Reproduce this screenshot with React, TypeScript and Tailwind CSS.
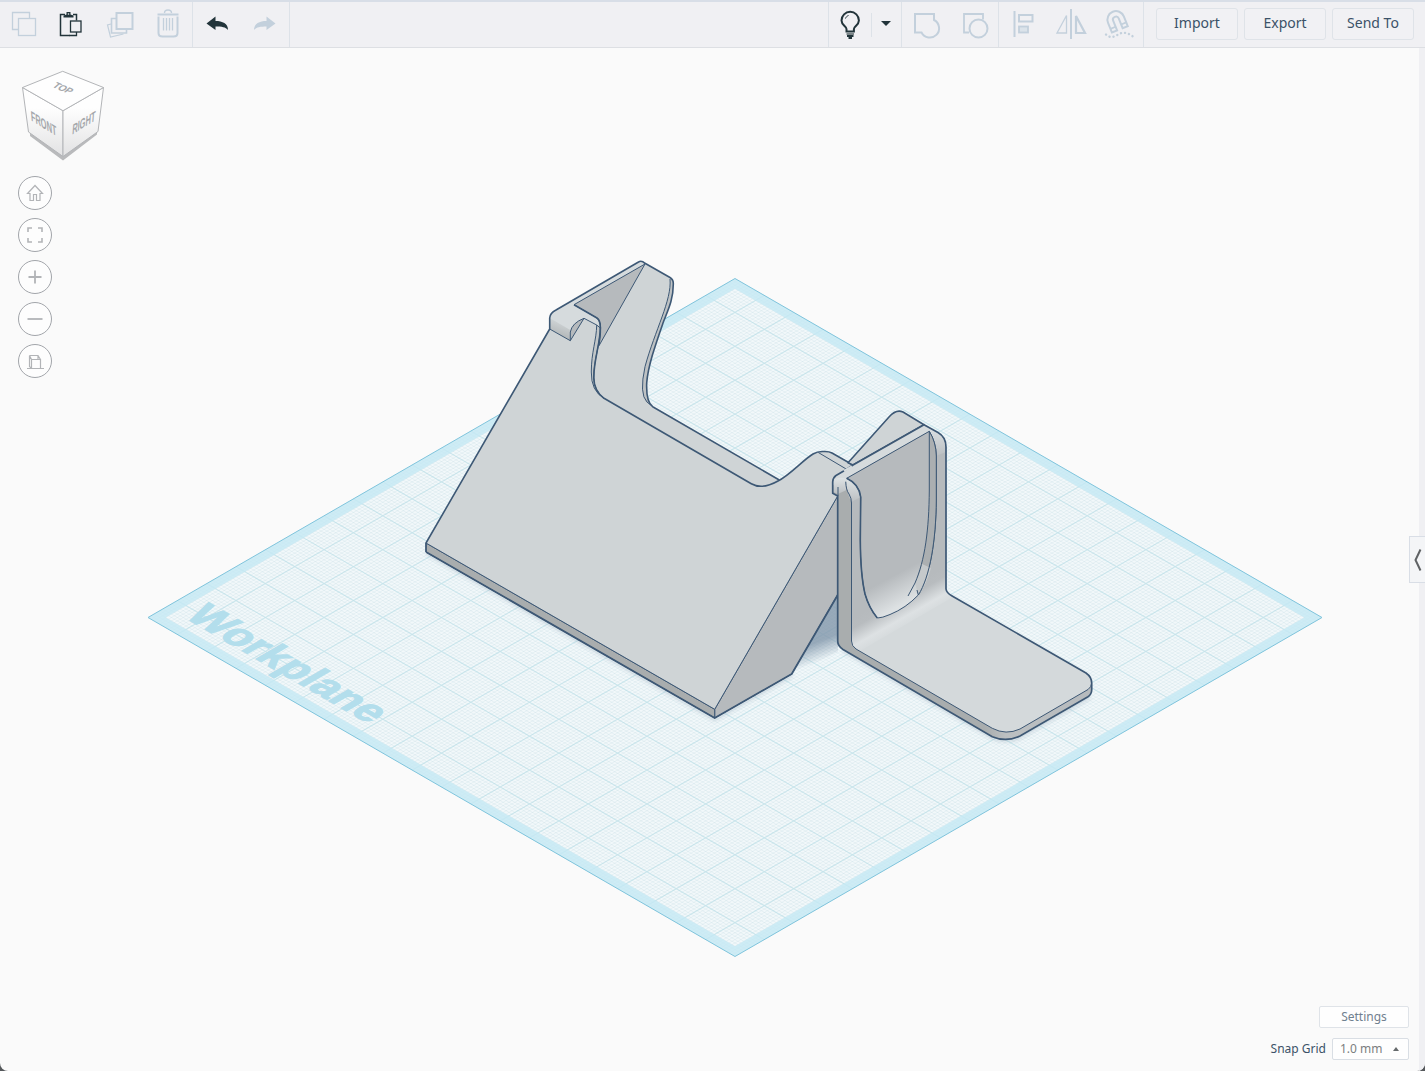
import type { ReactNode } from "react"
import clsx from "clsx"

const INK = "#22343a"
const MUTED = "#c3d0dc"
const EDGE = "#3d5875"

// The workplane is 200 x 200 mm, drawn in millimetres and projected once.
const SIZE = 200

function gridPath(step: number) {
  let d = ""
  for (let i = step; i < SIZE; i += step) {
    d += `M${i} 0V${SIZE}M0 ${i}H${SIZE}`
  }
  return d
}

const MINOR_GRID = gridPath(1)
const MAJOR_GRID = gridPath(10)

const BRACKET_OUTLINE =
  "M846.7 469.3L853 465L924 424.7L938 432.5Q946 437 946 447V589Q946.5 593 951.7 595.7L1086 673Q1091.7 677 1091.7 683V690Q1091.5 694.5 1088 696.7L1020 736Q1006 742.5 992.3 736.7L843 649.5Q837.7 646 837.7 641V496L832.7 493.3V482Q833 477.5 836 475.5z"

function ToolButton({ label, disabled, children }: { label: string; disabled?: boolean; children: ReactNode }) {
  return (
    <button type="button" aria-label={label} disabled={disabled} className="w-12 h-full">
      <svg
        viewBox="0 2 48 45"
        className="block w-12 h-[45px]"
        fill="none"
        stroke={disabled ? MUTED : INK}
        strokeWidth="1.8"
      >
        {children}
      </svg>
    </button>
  )
}

function ToolGroup({ className, children }: { className?: string; children: ReactNode }) {
  return <div className={clsx("flex h-full border-[#dde2e8]", className)}>{children}</div>
}

function ActionButton({ children }: { children: ReactNode }) {
  return (
    <button
      type="button"
      className="w-[82px] h-8 pb-0.5 rounded-[3px] border border-[#dfe3e8] bg-[#f1f1f4] text-sm text-[#3b5268]"
    >
      {children}
    </button>
  )
}

function Toolbar() {
  return (
    <header className="flex h-12 justify-between border-t-2 border-b border-t-[#d8dee7] border-b-[#dddfe3] bg-[#f0f0f3]">
      <div className="flex">
        <ToolGroup className="border-r">
          <ToolButton label="Copy" disabled>
            <path d="M18.5 29.5h-6v-17h17v6" strokeWidth="1.3" />
            <rect x="18.5" y="18.5" width="17" height="17" strokeWidth="1.3" />
          </ToolButton>
          <ToolButton label="Paste">
            <path d="M22 35.5h-9.5v-21h4.5M25 14.5h3.5v6" strokeWidth="1.5" />
            <rect x="22.500" y="21" width="10.5" height="11" strokeWidth="1.3" />
            <path d="M28.5 32v3.5h-7" strokeWidth="1.3" />
            <path d="M15.5 17.5v-2l3-1v-2.5h4v2.5l3 1v2z" fill={INK} stroke="none" />
            <circle cx="20.5" cy="14" r="0.8" fill="#f0f0f3" stroke="none" />
          </ToolButton>
          <ToolButton label="Duplicate" disabled>
            <rect x="20.500" y="13" width="16" height="16" strokeWidth="2" />
            <path d="M20 18.5h-4.500v14.500h15v-3.500" strokeWidth="1.6" />
            <path d="M15 24l-3.5 1 3 12 13-3" strokeWidth="1.2" />
          </ToolButton>
          <ToolButton label="Delete" disabled>
            <path d="M13.5 14.500h21" strokeWidth="2" />
            <path d="M20.5 13c0-2 1-3 3.5-3s3.5 1 3.5 3" strokeWidth="1.4" />
            <path d="M14.5 16.500v16.500c0 2.500 1.500 3.500 4 3.500h11c2.500 0 4-1 4-3.500v-16.500" strokeWidth="2" />
            <path d="M19.5 18v12.500M22.5 18v12.500M25.5 18v12.500M28.5 18v12.500" strokeWidth="1.3" />
          </ToolButton>
        </ToolGroup>
        <ToolGroup className="border-r">
          <ToolButton label="Undo">
            <path d="M13.5 23.500l9-7v4.500c7 0 12.500 2.500 12.500 9-2.500-3-6-3.500-12.500-3.500v3.500z" fill={INK} stroke="none" />
          </ToolButton>
          <ToolButton label="Redo" disabled>
            <path d="M34.5 23.500l-9-7v4.500c-7 0-12.500 2.500-12.500 9 2.500-3 6.500-3.500 12.500-3.500v3.500z" fill={MUTED} stroke="none" />
          </ToolButton>
        </ToolGroup>
      </div>

      <div className="flex">
        <ToolGroup className="border-l items-center">
          <button type="button" aria-label="Show hints" className="w-[42px]">
            <svg viewBox="0 2 42 45" className="block w-[42px] h-[45px]" fill="none" stroke={INK} strokeWidth="2">
              <path d="M17.5 31.500v-2.500c0-2.500-5-4-5-8.500a8.700 8.700 0 0 1 17.400 0c0 4.500-5 6-5 8.500v2.500z" />
              <path d="M16.500 18.500c.5-1.500 1.500-2.500 3-3" strokeWidth="1" />
              <path d="M17.500 34h7.500" stroke="#7b8588" />
              <path d="M18 36h6.500" />
              <path d="M19.500 38h3.500" />
            </svg>
          </button>
          <button
            type="button"
            aria-label="More view options"
            className="flex items-center justify-center w-[30px] h-6 border-l border-[#dde2e8] pb-0.5 pr-0.5"
          >
            <svg viewBox="0 0 10 5" className="w-2.5 h-[5px]" fill={INK}>
              <path d="M0 0h10L5 5z" />
            </svg>
          </button>
        </ToolGroup>
        <ToolGroup className="border-l">
          <ToolButton label="Group" disabled>
            <path d="M32 20v-6h-19v18.500h6.500a9.300 9.300 0 1 0 12.500-12.500z" strokeWidth="2" />
          </ToolButton>
          <ToolButton label="Ungroup" disabled>
            <path d="M19 32.500h-5v-18.500h19v5.500" strokeWidth="1.8" />
            <circle cx="28.5" cy="28.5" r="9" strokeWidth="2" />
          </ToolButton>
        </ToolGroup>
        <ToolGroup className="border-l">
          <ToolButton label="Align" disabled>
            <path d="M15.500 11v26" strokeWidth="2" />
            <rect x="20" y="15" width="13.500" height="6.500" strokeWidth="2" />
            <rect x="20" y="26.500" width="9" height="6" fill="#dbe3ea" />
          </ToolButton>
          <ToolButton label="Mirror" disabled>
            <path d="M24 9v30" strokeWidth="2" />
            <path d="M19.500 15.500v17.500h-9.500z" strokeWidth="1.300" />
            <path d="M29 16v17h9z" strokeWidth="2.200" />
          </ToolButton>
          <ToolButton label="Cruise" disabled>
            <g transform="rotate(-22 21.5 21)">
              <path d="M13 30v-10.500a8.500 8.500 0 0 1 17 0v10.500h-5.500v-10.500a3 3 0 0 0-6 0v10.500z" strokeWidth="2" />
              <path d="M13 26h5.500M24.500 26h5.500" strokeWidth="1.800" />
            </g>
            <path
              d="M11 34.500c4 4 8 2.500 12 0s9-2.500 15 2"
              strokeWidth="2.400"
              strokeDasharray="0.1 4"
              strokeLinecap="round"
            />
          </ToolButton>
        </ToolGroup>
        <div className="flex items-center gap-1.5 border-l border-[#dde2e8] pl-3 pr-[11px] pb-px">
          <ActionButton>Import</ActionButton>
          <ActionButton>Export</ActionButton>
          <ActionButton>Send To</ActionButton>
        </div>
      </div>
    </header>
  )
}

function Workplane() {
  return (
    <>
      <g transform="matrix(2.935 1.695 2.935 -1.695 148 617.5)">
        <rect width={SIZE} height={SIZE} fill="#f2f8fa" />
        <path d={MINOR_GRID} stroke="#a3cbd6" strokeOpacity="0.22" strokeWidth="0.2" fill="none" />
        <path d={MAJOR_GRID} stroke="#9bd3df" strokeOpacity="0.34" strokeWidth="0.4" fill="none" />
        <path
          d={`M0 0H${SIZE}V${SIZE}H0zM3 3V${SIZE - 3}H${SIZE - 3}V3z`}
          fill="#c4e8f4"
          fillOpacity="0.8"
          fillRule="evenodd"
        />
        <rect
          width={SIZE}
          height={SIZE}
          fill="none"
          stroke="#7fc4dc"
          strokeWidth="1"
          vectorEffect="non-scaling-stroke"
        />
      </g>
      <text
        transform="matrix(2.935 1.695 -2.935 1.695 183.500 617)"
        fontSize="12.4"
        fontFamily="'Liberation Sans', Arial, sans-serif"
        fontWeight="bold"
        fill="#b3deec"
        stroke="#b3deec"
        strokeWidth="0.4"
      >
        Workplane
      </text>
    </>
  )
}

function WedgeStand() {
  return (
    <g stroke={EDGE} strokeWidth="1" strokeLinejoin="round" fill="none">
      {/* side and bottom faces */}
      <path d="M714.7 709.3L837.7 496L849 500V575L791.7 674L714.7 718z" fill="#b6babd" />
      <path d="M426 543L714.7 709.3V718L426 552z" fill="#a9adae" />

      {/* sloped face together with the inside of the cut-out */}
      <path
        d="M426 543L549.7 329V318Q550 313 556 310L638.5 262Q641.5 260 645 263.3L670 277.5Q673.5 279.5 673.3 284C673.3 300 668 310 663 323C655 346 648 366 646.7 383Q646 402 652.7 406.7L779.3 480C790 475 803 460 813 454Q818 451 824 451.5Q829 451.3 832 453L853 465L846.7 478L837.7 496L714.7 709.3z"
        fill="#cfd4d6"
        stroke="none"
      />
      <path
        d="M670 278Q671.5 282 669.3 293C665 313 650 345 645 366.7Q639.5 394 646 402L652.7 406.7Q646 401 646.7 383C648 366 655 346 663 323C668 310 673.3 300 673.3 284Q673 280 670 278"
        fill="#bec2c4"
        stroke="none"
      />

      {/* rim and hook */}
      <path
        d="M549.7 329V318Q550 313 556 310L640 261.5L645 264L574 304.7L597 317.5Q600 320 598 326L584 318.3Q571 322 570.3 332V340.7z"
        fill="#d6dbdd"
        stroke="none"
      />
      <path d="M549.7 329V318L570.3 330V340.7z" fill="url(#hook)" stroke="none" />
      <path d="M570.3 340.7V332Q572 323 584 318.3z" fill="#b6babd" />
      <path d="M574 304.7L645 264L599 345.7Q601.5 331 600.3 324Q599.5 319.5 596 317.5z" fill="#b6babd" />
      <path
        d="M596.7 325C596.5 340 591.3 352 591.3 372Q591 391 604 398.3Q594 391 593.8 378C593.5 360 600.3 344 600.3 328z"
        fill="#c2c7c9"
      />
      <path d="M549.7 329L570.3 340.7M584 318.3L596.7 325M670 279C672 300 655 330 645 366.7Q639 394 647 402L652.7 406.7" />
      <path d="M818.3 452.5L846.7 469.3M714.7 709.3L837.7 496M426 543L714.7 709.3" />

      {/* silhouette */}
      <path
        strokeWidth="1.6"
        d="M426 552V543L549.7 329V318Q550 313 556 310L638.5 262Q641.5 260 645 263.3L670 277.5Q673.5 279.5 673.3 284C673.3 300 668 310 663 323C655 346 648 366 646.7 383Q646 402 652.7 406.7L779.3 480"
      />
      <path
        strokeWidth="1.6"
        d="M574 304.7L597 318Q600.5 320.5 600.3 328C600.3 344 593.5 360 593.8 378Q594 391 604 398.3L751.3 483.7Q762 490 778 481C790 475 803 460 813 454Q818 451 824 451.5Q829 451.3 832 453L853 465"
      />
      <path strokeWidth="1.8" d="M426 552L714.7 718L791.7 674L837.7 595" />
    </g>
  )
}

function Bracket() {
  return (
    <g stroke={EDGE} strokeWidth="1" strokeLinejoin="round" fill="none">
      {/* rear fin */}
      <path d="M848 462.7L889 417Q896 409 903 412L924 424.7L853 465z" fill="#cfd4d6" strokeWidth="1.6" />

      {/* whole body in the darker edge tone */}
      <path d={BRACKET_OUTLINE} fill="url(#plateEdge)" stroke="none" />

      {/* upright face with rounded shoulders */}
      <path
        d="M846.7 478.3L929.3 431.3L925 425L938 432.5Q946 437 946 447V592L851.5 646V500Q848 490 846.7 478.3z"
        fill="#b6babd"
        stroke="none"
      />
      <path d="M924 424.7L938 432.5Q946 437 945.7 452L936.3 456Q936 442 929.3 431.3z" fill="url(#shoulder)" stroke="none" />
      <path d="M846 478.3Q860 484 860.7 497L851.5 502Q846 492 846 478.3z" fill="url(#shoulder)" stroke="none" />
      <path
        d="M846.7 469.3L853 465L924 424.7L930 429L929.3 431.3L846.7 478.3L838 487L833 485Q832 478 838 474.5z"
        fill="#d6dbdd"
        stroke="none"
      />
      <path d="M833.5 482Q836 476 846 478.3L846.5 490L838 494L833.5 492z" fill="url(#shoulder)" stroke="none" />

      {/* foot plate */}
      <path
        d="M851.5 640L946 587Q947 593 951.7 595.7L1086 673Q1091.7 677 1091.7 683Q1091.5 687 1088 689.5L1020 729Q1006 735.5 992.3 728.3L856 649Q851.5 646 851.5 640z"
        fill="#d4d9db"
        stroke="none"
      />
      <path d="M851.5 612L946 559V589L953 597L860 651Q851.5 647 851.5 641z" fill="url(#fillet)" stroke="none" />

      {/* pocket */}
      <path
        d="M846.7 478.3L929.3 431.3Q936 442 936.3 456V500C936 540 930 577 918.3 595Q906 608 890 614.5Q882 618 877.3 618Q869 608 865 594Q860.5 575 860.3 540L860.7 497Q859 484 846.7 478.3z"
        fill="url(#pocket)"
      />
      <path
        d="M929.3 431.3Q936 442 936.3 456V500C936 540 930 577 918.3 595L915 583Q929 550 929.3 490z"
        fill="#abafb1"
        stroke="none"
      />
      <path d="M912 588Q920 575 922 564L931 568Q926 586 918.3 595z" fill="#d0d4d6" fillOpacity="0.7" stroke="none" />
      <path d="M929.3 431.3V490C929 530 925 560 915 583L908 596M917 590L918.3 595M929.3 431.3Q936 442 936.3 456V500C936 540 930 577 918.3 595" />
      <path
        d="M846.7 478.3Q859 484 860.7 497L860.3 540Q860.5 575 865 594Q869 608 877.3 618"
        strokeWidth="1.6"
      />
      <path d="M845.7 481.7Q846 490 849 494Q851.5 498 851.5 503V641Q851.5 646 856 649L992.3 728.3Q1006 735.5 1020 729L1088 689.5Q1091.5 687 1091.7 683M838 487V496" />
      <path d={BRACKET_OUTLINE} strokeWidth="1.7" />
      {/* the rim runs on into the stand here, so its edge is open */}
      <path d="M844 471L852 466.500" stroke="#d6dbdd" strokeWidth="2.500" />
    </g>
  )
}

function Scene() {
  return (
    <svg
      viewBox="0 48 1425 1023"
      preserveAspectRatio="xMidYMid slice"
      className="absolute inset-0 w-full h-full"
      role="img"
      aria-label="Phone stand on the workplane"
    >
      <defs>
        <linearGradient id="hook" x1="0.6" y1="0" x2="0.3" y2="1">
          <stop offset="0" stopColor="#d6dbdd" />
          <stop offset="1" stopColor="#a9adae" />
        </linearGradient>
        <linearGradient id="shoulder" x1="0" y1="0" x2="0" y2="1">
          <stop offset="0" stopColor="#dfe4e6" />
          <stop offset="1" stopColor="#bbbfc2" />
        </linearGradient>
        <linearGradient id="plateEdge" gradientUnits="userSpaceOnUse" x1="838" y1="0" x2="1092" y2="0">
          <stop offset="0" stopColor="#a9adae" />
          <stop offset="0.58" stopColor="#a9adae" />
          <stop offset="0.66" stopColor="#bcc0c2" />
          <stop offset="1" stopColor="#b6babd" />
        </linearGradient>
        <linearGradient id="fillet" gradientUnits="userSpaceOnUse" x1="889" y1="598" x2="906" y2="628">
          <stop offset="0" stopColor="#b6babd" />
          <stop offset="0.25" stopColor="#b8bcbf" />
          <stop offset="0.7" stopColor="#dde1e3" />
          <stop offset="1" stopColor="#d4d9db" />
        </linearGradient>
        <linearGradient id="pocket" gradientUnits="userSpaceOnUse" x1="882" y1="582" x2="896" y2="608">
          <stop offset="0" stopColor="#b6babd" />
          <stop offset="1" stopColor="#dde1e3" />
        </linearGradient>
        <linearGradient id="shade" gradientUnits="userSpaceOnUse" x1="812" y1="644" x2="819" y2="662">
          <stop offset="0" stopColor="#8196aa" stopOpacity="0.8" />
          <stop offset="1" stopColor="#8196aa" stopOpacity="0" />
        </linearGradient>
        <filter id="soft" x="-5%" y="-5%" width="110%" height="110%">
          <feGaussianBlur stdDeviation="2" />
        </filter>
      </defs>
      <Workplane />
      <path
        d="M427 553L714.7 719L792 675M843 650L992 737Q1006 743 1020 737L1090 697"
        stroke="#8196aa"
        strokeOpacity="0.4"
        strokeWidth="3"
        fill="none"
        filter="url(#soft)"
      />
      <path d="M791 675L838 594V652L800 672z" fill="url(#shade)" />
      <WedgeStand />
      <Bracket />
    </svg>
  )
}

function ViewCube() {
  return (
    <svg viewBox="18 70 90 92" className="block w-[90px] h-[92px]" role="img" aria-label="View cube">
      <defs>
        <linearGradient id="cubeSide" x1="0" y1="0" x2="0" y2="1">
          <stop offset="0.3" stopColor="#fefefe" />
          <stop offset="1" stopColor="#e2e2e3" />
        </linearGradient>
      </defs>
      <path d="M30 132L63 155.5L97 131.5V134.500L63 160.5L30 136z" fill="#b9babc" />
      <g stroke="#b3b5b8" strokeWidth="1" strokeLinejoin="round">
        <path d="M22.5 87.5L63 110.7V156.5L28.5 132z" fill="url(#cubeSide)" />
        <path d="M103.5 87.5L63 110.7V156.5L98 131.5z" fill="url(#cubeSide)" />
        <path d="M62.700 71.300L103.5 87.5L63 110.7L22.5 87.5z" fill="#fefefe" />
      </g>
      <g
        fill="#a4a7ab"
        fontFamily="'Liberation Sans', Arial, sans-serif"
        fontWeight="bold"
        fontSize="11"
        textAnchor="middle"
      >
        <text transform="matrix(0.78 0.34 -0.7 0.62 60.5 90.5)">TOP</text>
        <text transform="matrix(0.68 0.42 0.1 1.3 44 128.5)">FRONT</text>
        <text transform="matrix(0.68 -0.42 -0.1 1.3 83.5 127.5)">RIGHT</text>
      </g>
    </svg>
  )
}

function ViewButton({ label, children }: { label: string; children: ReactNode }) {
  return (
    <button
      type="button"
      aria-label={label}
      className="w-[34px] h-[34px] rounded-full border border-[#a2a5aa] bg-[#fdfdfd]"
    >
      <svg viewBox="0 0 32 32" className="block w-8 h-8" fill="none" stroke="#b2b4b7" strokeWidth="1.2">
        {children}
      </svg>
    </button>
  )
}

function ViewControls() {
  return (
    <nav aria-label="View" className="flex flex-col gap-2">
      <ViewButton label="Home view">
        <path d="M8.5 16.5l7.500-8 7.500 8h-2.500v7h-3.500v-6h-3v6h-3.500v-7z" />
      </ViewButton>
      <ViewButton label="Fit all in view">
        <path d="M9 13v-4h4M19 9h4v4M23 19v4h-4M13 23h-4v-4" strokeWidth="1.6" />
      </ViewButton>
      <ViewButton label="Zoom in">
        <path d="M16 9.5v13M9.5 16h13" strokeWidth="1.8" />
      </ViewButton>
      <ViewButton label="Zoom out">
        <path d="M8.5 16h15" strokeWidth="1.8" />
      </ViewButton>
      <ViewButton label="Switch to flat view">
        <path d="M8 23.5h17M12.5 14.5h9v9h-9zM10.5 10.5h8.5l2.5 4M10.5 10.5l2 4M10.5 10.5v11l2 2M19 10.5v4" />
      </ViewButton>
    </nav>
  )
}

export default function App() {
  return (
    <div className="min-h-screen flex flex-col bg-[#55585b] font-['Noto_Sans',sans-serif]">
      <div className="flex-1 flex flex-col overflow-hidden rounded-b-lg bg-[#fafafa]">
        <Toolbar />
        <div className="relative flex-1 flex">
          <main className="flex-1 flex flex-col justify-between">
            <Scene />
            <div className="relative flex flex-col items-start gap-3.5 pl-[18px] pt-[22px]">
              <ViewCube />
              <ViewControls />
            </div>
            <div className="relative flex flex-col items-end gap-2.5 pr-2.5 pb-[11px] text-xs text-[#3b5268]">
              <button
                type="button"
                className="w-[90px] h-[22px] rounded-xs border border-[#dfe3e8] bg-[#fefefe] text-[#70808f]"
              >
                Settings
              </button>
              <div className="flex items-center gap-1.5">
                <label htmlFor="snap-grid">Snap Grid</label>
                <div className="relative">
                  <select
                    id="snap-grid"
                    defaultValue="1.0"
                    className="block w-[77px] h-[22px] appearance-none rounded-xs border border-[#d9dee4] bg-[#fefefe] pl-[7px] text-[#7c7f80]"
                  >
                    <option value="0.5">0.5 mm</option>
                    <option value="1.0">1.0 mm</option>
                    <option value="2.0">2.0 mm</option>
                  </select>
                  <svg
                    viewBox="0 0 6 4"
                    className="pointer-events-none absolute right-2.5 top-[9px] w-1.5 h-1"
                    fill="#666a6c"
                  >
                    <path d="M0 4L3 0l3 4z" />
                  </svg>
                </div>
              </div>
            </div>
          </main>
          <aside className="relative w-1.5 bg-[#f0f0f3]">
            <button
              type="button"
              aria-label="Open shapes panel"
              className="absolute right-0 top-[488px] flex items-center justify-end w-4 h-[47px] border border-r-0 border-[#d9dee6] bg-[#f4f5f7]"
            >
              <svg viewBox="0 0 11 24" className="w-[11px] h-6" fill="none" stroke="#5f6264" strokeWidth="2">
                <path d="M6.5 1.5L1.5 12l5 10.5" />
              </svg>
            </button>
          </aside>
        </div>
      </div>
    </div>
  )
}
